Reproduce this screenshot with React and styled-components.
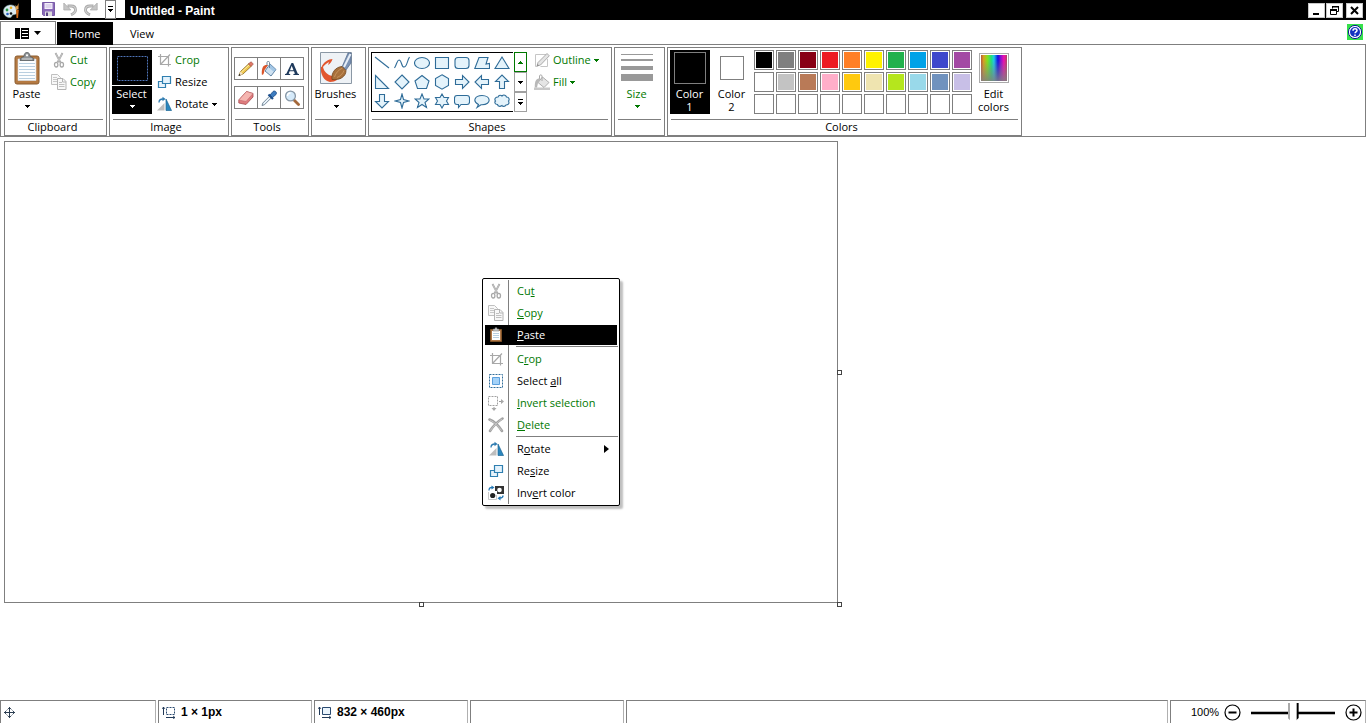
import React, { useState } from "react";
import styled, { createGlobalStyle, css } from "styled-components";

const GRAY = "#7f7f7f";
const GREEN = "#007800";
const UI = '"Open Sans", "Noto Sans", sans-serif';
const SANS = '"Liberation Sans", Arial, sans-serif';

const GlobalStyle = createGlobalStyle`
  *, *::before, *::after { box-sizing: border-box; }
  body { margin: 0; background: #fff; color: #000; font: 11px/13px ${UI}; overflow: hidden; }
  button { margin: 0; padding: 0; border: 0; background: none; color: inherit; font: inherit; }
  svg { display: block; flex: none; }
`;

const Window = styled.div`
  display: flex;
  flex-direction: column;
  height: 100vh;
`;

/* ---------- title bar ---------- */
const TitleBar = styled.header`
  display: flex;
  align-items: center;
  height: 20px;
  padding: 0 3px;
  background: #000;
  color: #fff;
`;
const QuickAccess = styled.div`
  display: flex;
  align-items: center;
  align-self: flex-start;
  gap: 7px;
  height: 18px;
  margin-left: 11px;
  padding: 0 9px 0 10px;
  background: #fff;
  color: #000;
`;
const QuickButton = styled.button`
  display: flex;
  height: 18px;
  align-items: center;
`;
const QuickMore = styled(QuickButton)`
  justify-content: center;
  width: 11px;
  height: 19px;
  border: 1px solid ${GRAY};
`;
const Title = styled.h1`
  flex: 1;
  margin: 0 0 0 5px;
  padding-top: 1px;
  font: bold 12px/14px ${SANS};
`;
const WindowButtons = styled.div`
  display: flex;
  gap: 1px;
`;
const WindowButton = styled.button`
  display: flex;
  align-items: center;
  justify-content: center;
  width: 17px;
  height: 15px;
  margin-left: ${(p) => (p.$apart ? 2 : 0)}px;
  border: 1px solid #c8c8c8;
  background: #fff;
`;

/* ---------- tabs ---------- */
const TabRow = styled.nav`
  display: flex;
  align-items: stretch;
  height: 25px;
  padding-top: 1px;
  border-bottom: 1px solid ${GRAY};
`;
const FileButton = styled.button`
  display: flex;
  align-items: center;
  gap: 5px;
  width: 56px;
  padding-left: 14px;
  border: 1px solid ${GRAY};
  border-bottom: 0;
`;
const Tab = styled.button`
  width: 56px;
  margin: 1px 0 -1px 1px;
  ${(p) => p.$active && css`background: #000; color: #fff;`}
`;
const HelpButton = styled.button`
  align-self: flex-start;
  margin: 3px 3px 0 auto;
`;

/* ---------- ribbon ---------- */
const Ribbon = styled.section`
  display: flex;
  gap: 2px;
  padding: 2px 3px 0;
  border: 1px solid ${GRAY};
  border-top: 0;
`;
const GroupBox = styled.section`
  display: flex;
  flex-direction: column;
  flex: none;
  width: ${(p) => p.$width}px;
  height: 89px;
  border: 1px solid ${GRAY};
`;
const GroupBody = styled.div`
  display: flex;
  flex: 1;
  align-items: flex-start;
  gap: ${(p) => p.$gap}px;
  padding: 2px 2px 0;
`;
const GroupLabel = styled.h2`
  height: 16px;
  margin: 0 3px;
  padding-right: 6px;
  border-top: 1px solid ${GRAY};
  font: inherit;
  text-align: center;
`;
const BigButton = styled.button`
  display: flex;
  flex-direction: column;
  align-items: center;
  width: ${(p) => p.$width || 40}px;
  height: 64px;
  padding-top: 2px;
  color: ${(p) => (p.$active ? "#fff" : p.disabled ? GREEN : "#000")};
  background: ${(p) => (p.$active ? "#000" : "transparent")};
`;
const SelectButton = styled(BigButton)`
  background: linear-gradient(#000 35px, #fff 35px, #fff 36px, #000 36px);
`;
const BigIcon = styled.span`
  display: flex;
  flex: none;
  align-items: center;
  justify-content: center;
  height: 32px;
`;
const BigText = styled.span`
  flex: none;
  margin: 3px 0 5px;
  padding-right: 1px;
  line-height: 13px;
`;
const CommandList = styled.div`
  display: flex;
  flex-direction: column;
  gap: 2px;
`;
const Command = styled.button`
  display: flex;
  align-items: center;
  gap: 3px;
  height: 20px;
  color: ${(p) => (p.disabled ? GREEN : "#000")};
`;
const CommandText = styled.span`
  padding-bottom: 2px;
`;
const ToolGrid = styled.div`
  display: grid;
  grid-template-columns: repeat(3, 23px);
  row-gap: 6px;
  padding-top: 7px;
`;
const ToolButton = styled.button`
  display: flex;
  align-items: center;
  justify-content: center;
  width: 24px;
  height: 23px;
  border: 1px solid ${GRAY};
`;
const Gallery = styled.div`
  display: flex;
  margin-top: 2px;
`;
const ShapeGrid = styled.div`
  display: grid;
  grid-template-columns: repeat(7, 20px);
  grid-template-rows: repeat(3, 1fr);
  width: 142px;
  height: 60px;
  border: 1px solid #000;
  border-right: 0;
`;
const ShapeButton = styled.button`
  display: flex;
  align-items: center;
  justify-content: center;
`;
const GalleryScroll = styled.div`
  display: grid;
  grid-template-rows: repeat(3, 1fr);
  width: 13px;
  margin-left: 1px;
`;
const ScrollButton = styled.button`
  display: flex;
  align-items: center;
  justify-content: center;
  color: ${(p) => (p.disabled ? GREEN : "#000")};
  border: 1px solid ${(p) => (p.disabled ? GREEN : "#a0a0a0")};
`;
const ColorWell = styled.span`
  width: ${(p) => p.$size}px;
  height: ${(p) => p.$size}px;
  border: 1px solid ${GRAY};
  background: ${(p) => p.$color};
`;
const Palette = styled.div`
  display: grid;
  grid-template-columns: repeat(10, 20px);
  gap: 2px;
`;
const Swatch = styled.button`
  width: 20px;
  height: 20px;
  padding: 1px;
  border: 1px solid ${GRAY};
  background: ${(p) => p.$color} content-box;
`;
const Spectrum = styled.span`
  width: 28px;
  height: 28px;
  border: 1px solid #fff;
  outline: 1px solid #aaa;
  background: linear-gradient(transparent 20%, #808080dd),
    linear-gradient(90deg, #b55a3c, #d8a020 10%, #7fe020 25%, #20e080 40%, #20c8e8 50%, #1010e0 65%, #8010d0 75%, #f010b0 88%, #b04060);
`;

/* ---------- canvas ---------- */
const Workspace = styled.main`
  position: relative;
  flex: 1;
  min-height: 0;
  padding: 4px;
  overflow: hidden;
`;
const Canvas = styled.div`
  position: relative;
  width: 834px;
  height: 462px;
  border: 1px solid ${GRAY};
  background: #fff;
`;
const Handle = styled.span`
  position: absolute;
  left: ${(p) => p.$left};
  top: ${(p) => p.$top};
  width: 5px;
  height: 5px;
  border: 1px solid #444;
  background: #fff;
`;

/* ---------- context menu ---------- */
const Menu = styled.ul`
  position: absolute;
  left: 482px;
  top: 141px;
  width: 138px;
  margin: 0;
  padding: 1px 2px;
  list-style: none;
  border: 1px solid #000;
  border-radius: 2px;
  background: linear-gradient(${GRAY}, ${GRAY}) 25px 1px / 1px calc(100% - 2px) no-repeat #fff;
  box-shadow: 3px 3px 2px rgba(0, 0, 0, 0.25);
`;
const MenuSeparator = styled.li`
  height: 2px;
  margin: 0 -1px 0 31px;
  border-top: 1px solid ${GRAY};
`;
const MenuItem = styled.button`
  display: flex;
  align-items: center;
  gap: 13px;
  width: 100%;
  height: 22px;
  padding: 0 8px 0 3px;
  border: solid transparent;
  border-width: 1px 0;
  background-clip: padding-box;
  text-align: left;
  color: ${(p) => (p.$active ? "#fff" : p.disabled ? GREEN : "#000")};
  background-color: ${(p) => (p.$active ? "#000" : "transparent")};
`;
const MenuText = styled.span`
  flex: 1;
  padding-bottom: 2px;
  white-space: nowrap;
`;

/* ---------- status bar ---------- */
const StatusBar = styled.footer`
  display: flex;
  gap: 2px;
  height: 23px;
`;
const StatusCell = styled.div`
  display: flex;
  align-items: center;
  gap: 5px;
  flex: ${(p) => (p.$grow ? "1" : "none")};
  width: ${(p) => p.$width || 154}px;
  padding-left: 3px;
  border: 1px solid ${GRAY};
  border-bottom: 0;
  border-right-color: #b0b0b0;
  font: bold 12px/14px ${SANS};
`;
const ZoomCell = styled(StatusCell)`
  padding-left: 20px;
  font-size: 11px;
  font-weight: normal;
`;
const ZoomRange = styled.input`
  appearance: none;
  width: 84px;
  height: 20px;
  margin: 2px 5px 0;
  background: linear-gradient(#bbb 0 1px, #000 1px 3px, #bbb 3px 4px) center / 100% 4px no-repeat;
  &::-webkit-slider-thumb {
    appearance: none;
    width: 11px;
    height: 20px;
    background: linear-gradient(90deg, #aaa 2px, #fff 2px, #fff 8px, #aaa 8px, #aaa 9px, #000 9px);
    clip-path: polygon(0 0, 100% 0, 100% 75%, 50% 100%, 0 75%);
  }
`;

/* ---------- icons ---------- */
const Svg = ({ w = 16, h = 16, children, ...rest }) => (
  <svg width={w} height={h} viewBox={`0 0 ${w} ${h}`} fill="none" aria-hidden="true" {...rest}>
    {children}
  </svg>
);
const Down = ({ wide }) =>
  wide ? (
    <Svg w={7} h={4}><path d="M0 0h7L3.500 4z" fill="currentColor" /></Svg>
  ) : (
    <Svg w={5} h={3} shapeRendering="crispEdges"><path d="M0 0h5v1H4v1H3v1H2V2H1V1H0z" fill="currentColor" /></Svg>
  );
const Up = () => (
  <Svg w={5} h={3} shapeRendering="crispEdges"><path d="M0 3h5V2H4V1H3V0H2v1H1v1H0z" fill="currentColor" /></Svg>
);
const DownBar = () => (
  <Svg w={5} h={6} shapeRendering="crispEdges"><path d="M0 0h5v1H0zM0 3h5v1H4v1H3v1H2V5H1V4H0z" fill="currentColor" /></Svg>
);

const AppIcon = () => (
  <Svg w={17} h={17}>
    <path d="M8 3C3.500 3 .5 5.500 .5 9.500S4 15.500 7 15.500c2 0 1.500-1.800 2.500-2.500 1.500-.8 4.500.2 4.500-3.500S11.500 3 8 3z" fill="#dcebf2" stroke="#8aa" strokeWidth=".6" />
    <circle cx="4" cy="8" r="1.400" fill="#2a9d4a" /><circle cx="8" cy="5.800" r="1.300" fill="#e8b020" />
    <circle cx="4.500" cy="12" r="1.300" fill="#2a60c0" /><circle cx="8" cy="11.500" r="1.300" fill="#111" />
    <path d="M13 8l.5 8h1.500l.8-8z" fill="#d06a1a" /><path d="M12.500 7.500V3l1.500 1.500L15.500 1v6.500z" fill="#e0a050" />
  </Svg>
);
const SaveIcon = () => (
  <Svg w={15} h={15}>
    <path d="M1.500.5h12v13h-11l-1-1z" fill="#8a6ab8" stroke="#7a5ca8" />
    <path d="M3.500 1h8v6h-8z" fill="#f4f0fa" /><path d="M4.500 3h6M4.500 5h6" stroke="#c8b8e0" />
    <path d="M4 9.500h7V14H4z" fill="#ddd" /><path d="M5 10.500h2V14H5z" fill="#5a4585" />
  </Svg>
);
const UndoIcon = ({ flip }) => (
  <Svg w={14} h={14} transform={flip ? "scale(-1 1)" : undefined}>
    <path d="M4.500 4H8c3 0 4.500 1.700 4.500 4S11 11.500 8 12.800" stroke="#a8a8a8" strokeWidth="2.800" />
    <path d="M5.500 4H8c3 0 4.500 1.700 4.500 4S11 11.500 8.500 12.500" stroke="#d2d2d2" strokeWidth="1.200" />
    <path d="M.8 1v7h7z" fill="#c6c6c6" stroke="#a8a8a8" strokeWidth=".7" />
  </Svg>
);
const MinIcon = () => <Svg w={11} h={11}><path d="M2 8h6v2H2z" fill="#000" /></Svg>;
const RestoreIcon = () => (
  <Svg w={11} h={11}>
    <path d="M3.500 1v2.500M3 1.500h7M9.500 1v5.500H8" stroke="#000" /><path d="M3 1h7v1.500H3z" fill="#000" />
    <path d="M1.500 4.500h6v5h-6z" stroke="#000" /><path d="M1 4h7v2H1z" fill="#000" />
  </Svg>
);
const CloseIcon = () => <Svg w={11} h={11}><path d="M2 2l7 7M9 2L2 9" stroke="#000" strokeWidth="2" /></Svg>;
const FileIcon = () => (
  <Svg w={14} h={11} shapeRendering="crispEdges">
    <path d="M0 0h5v11H0zM6 0h8v11H6zM7 2v1h6V2zM7 5v1h6V5zM7 8v1h6V8z" fill="#000" fillRule="evenodd" />
  </Svg>
);
const HelpIcon = () => (
  <Svg>
    <path d="M0 0h16v16H0z" fill="#35e04a" />
    <circle cx="8" cy="8" r="6.600" fill="#fff" stroke="#0a1a90" />
    <circle cx="8" cy="8" r="5" fill="#1230c0" />
    <path d="M6 6.800C6 5.300 7 4.800 8 4.800s2 .6 2 1.700c0 1.500-2 1.300-2 2.800M8 10.500V12" stroke="#fff" strokeWidth="1.500" />
  </Svg>
);
const PasteBig = () => (
  <Svg w={26} h={33}>
    <rect x="1" y="4" width="24" height="28" rx="2" fill="#b57a42" stroke="#8a5c30" />
    <path d="M4 7h18v21.500H4z" fill="#fdfeff" stroke="#d8dfe6" strokeWidth=".6" />
    <path d="M5 11.500h16M5 14.500h16M5 17.500h16M5 20.500h16M5 23.500h16M5 26.500h16" stroke="#b9cfe0" />
    <path d="M6 8.500c0-3 2-3 4-4 0-2.500 1-4 3-4s3 1.500 3 4c2 1 4 1 4 4z" fill="#8f9396" stroke="#565a5d" strokeWidth=".8" />
    <circle cx="13" cy="3.300" r="1.100" fill="#fff" /><path d="M8 7h10" stroke="#d5d8da" />
  </Svg>
);
const CutIcon = () => (
  <Svg>
    <path d="M4.500 1l5 9.500M11.500 1l-5 9.500" stroke="#a5a5a5" strokeWidth="1.800" />
    <path d="M4.800 1.500l4 8M11.200 1.500l-4 8" stroke="#d8d8d8" strokeWidth=".6" />
    <ellipse cx="5.200" cy="12.700" rx="1.700" ry="2.300" stroke="#a8a8a8" strokeWidth="1.300" />
    <ellipse cx="10.800" cy="12.700" rx="1.700" ry="2.300" stroke="#a8a8a8" strokeWidth="1.300" />
  </Svg>
);
const CopyIcon = () => (
  <Svg>
    <path d="M.5.5h6l3 3v7h-9z" fill="#f8f8f8" stroke="#c0c0c0" /><path d="M2 3.500h4M2 5.500h4M2 7.500h4" stroke="#c8c8c8" />
    <path d="M6.500 4.500h5.500l3 3v8H6.500z" fill="#f8f8f8" stroke="#b4b4b4" /><path d="M11.500 4.500v3.500h3.500" stroke="#b4b4b4" />
    <path d="M8 8.500h3M8 10.500h5.500M8 12.500h5.500" stroke="#c0c0c0" />
  </Svg>
);
const PasteSmall = () => (
  <Svg>
    <path d="M2.500 2.500h11v12h-11z" fill="#b07848" stroke="#7d5228" /><path d="M4 4h8v9H4z" fill="#fff" />
    <path d="M5 6.500h6M5 8.500h6M5 10.500h6" stroke="#b9cfe0" /><path d="M5 4V2h2V.8h2V2h2v2z" fill="#c8c8c8" stroke="#777" strokeWidth=".5" />
  </Svg>
);
const CropIcon = () => (
  <Svg>
    <path d="M4.500 2v10.500H15M2 4.500h10.500V14.500M4.500 12.500L14 2.500" stroke="#a8a8a8" strokeWidth="1.200" />
  </Svg>
);
const ResizeIcon = () => (
  <Svg>
    <path d="M2.500 7.500h7v6h-7z" fill="#e8f3fb" stroke="#2f7fb0" strokeWidth="1.200" />
    <path d="M6.500 2.500h8v7h-8z" fill="#e3f2fc" stroke="#2f7fb0" strokeWidth="1.200" />
  </Svg>
);
const RotateIcon = () => (
  <Svg>
    <path d="M8.500 7v7.500H1z" fill="#bdbdbd" /><path d="M10 3v11.500h5.500z" fill="#2b86bd" stroke="#1d6797" strokeWidth=".7" />
    <path d="M3 6.500C3 4 4.500 3 7 3" stroke="#2c7ab0" strokeWidth="1.300" /><path d="M6.500.8v4.400L9.500 3z" fill="#2c7ab0" />
  </Svg>
);
const SelectBig = () => (
  <Svg w={31} h={25}><path d="M.5.5h30v24H.5z" stroke="#4f74b8" strokeDasharray="2 1" /></Svg>
);
const SelectAllIcon = () => (
  <Svg><path d="M1.500 1.500h13v13h-13z" stroke="#336f9b" strokeDasharray="2 1" /><path d="M4.500 4.500h7v7h-7z" fill="#a4d2f8" stroke="#5b9fdc" /></Svg>
);
const InvertSelIcon = () => (
  <Svg>
    <path d="M.5 1.500h9v9h-9z" stroke="#a0a0a0" strokeDasharray="2 1" />
    <path d="M11 6.500h4M6 12v3" stroke="#9a9a9a" /><path d="M13 4v5l3-2.500zM3.500 13h5L6 16z" fill="#a8a8a8" />
  </Svg>
);
const DeleteIcon = () => (
  <Svg>
    <path d="M1.500 2.500c5 2 9 6 12.500 11.500M14.500 1.500C9 5 5 9 2 14" stroke="#a2a2a2" strokeWidth="2.600" strokeLinecap="round" />
    <path d="M2 3c5 2.500 8 6 11.500 10.500M14 2C9 5.500 5 9.500 2.500 13.500" stroke="#ccc" strokeWidth=".9" />
  </Svg>
);
const InvertColorIcon = () => (
  <Svg>
    <path d="M7 1h9v8H9V6H7z" fill="#333" /><circle cx="11.500" cy="5" r="2.300" fill="#fff" />
    <circle cx="4.700" cy="10.500" r="2.600" fill="#222" /><path d="M.5 7v7.500h8V10" stroke="#bbb" strokeWidth=".8" />
    <path d="M1 5.500C1 3 2 2.500 4 2.500M15 10.500c0 2-1 2.500-3 2.500" stroke="#2378b5" strokeWidth="1.300" />
    <path d="M3.500.5v4l3-2zM12.500 11v4.500l-3-2.200z" fill="#2378b5" />
  </Svg>
);
const ToolIcons = {
  Pencil: (
    <Svg>
      <path d="M1 14.500l1.500-4 8.500-8 2.500 2.500-8.500 8z" fill="#f0c850" stroke="#8a6a20" strokeWidth=".8" />
      <path d="M10.500 3l2.500 2.500 2-2c.7-.7-1.800-3.200-2.500-2.500z" fill="#e07868" stroke="#97463a" strokeWidth=".6" />
      <path d="M1 14.500l1.500-4L5 13z" fill="#f4e4c8" /><path d="M.5 15l.7-2.200 1.500 1.500z" fill="#222" /><path d="M3.500 11l7.500-7" stroke="#fff0a8" />
    </Svg>
  ),
  "Fill with color": (
    <Svg>
      <path d="M9 3l6 5.500-5 6.500-6-5z" fill="#cfe2f2" stroke="#54789c" strokeWidth=".9" />
      <path d="M9 3l6 5.500-2 2.500L7 6z" fill="#86b4dc" opacity=".6" />
      <path d="M8.500 7V1.500C8.500 0 6 0 6 1.500V5" stroke="#6e8496" />
      <path d="M7 4C3 3.500.5 5 .8 13.500 2 14.500 3 13 3.500 9L5 7z" fill="#d9552b" />
    </Svg>
  ),
  Text: (
    <Svg>
      <path d="M7.500 2h1.700l4.600 10.700 1.200.4v.9H9.400v-.9l1.500-.4-.9-2.400H5.600l-.9 2.400 1.500.4v.9H1v-.9l1.300-.4zM7.700 4.800L6 9.300h3.500z" fill="#1f3a5c" />
    </Svg>
  ),
  Eraser: (
    <Svg>
      <path d="M.8 10L8.500 1.500l6.500 2v3.500L8 14.500l-7.200-1.500z" fill="#e07c7e" stroke="#a84c50" strokeWidth=".8" />
      <path d="M.8 10L8.500 1.500l6.500 2L8 11.500z" fill="#f5b5b0" stroke="#b86266" strokeWidth=".5" />
    </Svg>
  ),
  "Color picker": (
    <Svg>
      <path d="M1 15.500l.8-2.500 7-7 1.700 1.700-7 7z" fill="#e8f2fa" stroke="#6a7f90" strokeWidth=".9" />
      <path d="M7.500 4.500l4.500 4.500" stroke="#1c4f8c" strokeWidth="2.200" />
      <path d="M9 5l3-3.500c2-1.500 4.500 1 3 3L11.500 7.500z" fill="#3d7cc0" stroke="#1a4a84" strokeWidth=".8" />
    </Svg>
  ),
  Magnifier: (
    <Svg>
      <path d="M10 10l4.500 4.500" stroke="#a4683a" strokeWidth="2.800" strokeLinecap="round" />
      <circle cx="6.500" cy="6" r="4.900" fill="#d5eafa" stroke="#8797a6" strokeWidth="1.300" />
      <path d="M3.500 6c0-2 1-3 3-3" stroke="#fff" strokeWidth="1.400" />
    </Svg>
  ),
};
const BrushIcon = () => (
  <Svg w={32} h={32}>
    <path d="M.5.5h31v31H.5z" fill="#eef2f6" stroke="#8b98a5" />
    <path d="M12.500 7c-4 0-9 3-11 8l-.5 3c3-5 6-7 8-8l-1 3c2-1 4-4 4.500-6z" fill="#e2562e" />
    <path d="M1 15c-1 7 3 14 9 15 3 0 5-1 7-2l-5-4C8 23 4 20 3 15z" fill="#e2562e" />
    <path d="M22 15L28 1h3v10l-5 7z" fill="#7b93b5" stroke="#52688a" strokeWidth=".7" />
    <path d="M24 15L30.500 2" stroke="#e6eef7" strokeWidth="2" />
    <path d="M12 27.500c-1-6 3-12.500 10-13l4 4c0 6-6 10-14 9z" fill="#a8713c" stroke="#704620" strokeWidth=".8" />
    <path d="M14.500 25c1-4 4-7 8-9M17 25.500c3-1 6-4 7-7" stroke="#c99560" strokeWidth=".9" />
  </Svg>
);
const OutlineIcon = () => (
  <Svg>
    <path d="M12 2.500H1.500v12h2M13.500 7v7.500h-7" stroke="#c6c6c6" />
    <path d="M3 14l1-3.500L13 1.500l2.300 2.300L6.500 13z" fill="#e4e4e4" stroke="#a2a2a2" strokeWidth=".9" /><path d="M3 14l.6-2 1.500 1.500z" fill="#888" />
  </Svg>
);
const FillIcon = () => (
  <Svg>
    <path d="M0 13.500h16V16H0z" fill="#c8c8c8" />
    <path d="M8.500 3l6.500 5.500-5 5L4 8.500z" fill="#e5e5e5" stroke="#a6a6a6" strokeWidth=".9" />
    <path d="M8 7V2C8 .5 5.500.5 5.500 2v3.500" stroke="#aaa" /><path d="M6.500 4.500C3 4 .5 5.500.8 13.500H3L4 9z" fill="#b8b8b8" />
  </Svg>
);
const SizeIcon = () => (
  <Svg w={32} h={28}><path d="M0 0h32v1H0zM0 5h32v2H0zM0 12h32v4H0zM0 20h32v7H0z" fill="#999" /></Svg>
);
const MoveIcon = () => (
  <Svg w={11} h={11}>
    <path d="M5.500 0v11M0 5.500h11" stroke="#2a3c50" /><path d="M3.500 2.500l2-2 2 2M3.500 8.500l2 2 2-2M2.500 3.500l-2 2 2 2M8.500 3.500l2 2-2 2" stroke="#2a3c50" strokeWidth=".9" />
  </Svg>
);
const DimensionIcon = ({ dashed }) => (
  <Svg w={14} h={13}>
    <path d="M4.500 1.500h8v7h-8z" fill={dashed ? "#fff" : "#eaf4fc"} stroke="#2a4a70" strokeDasharray={dashed ? "2 1" : undefined} />
    <path d="M1.500 1v8M4 11.500h9" stroke="#223a58" />
    <path d="M0 3l1.500-2L3 3M11 10l2 1.500-2 1.500" stroke="#223a58" strokeWidth=".8" />
  </Svg>
);
const ZoomIcon = ({ plus }) => (
  <Svg w={17} h={17}>
    <circle cx="8.500" cy="8.500" r="7.500" fill="#fff" stroke="#000" strokeWidth="1.200" />
    <path d={plus ? "M4.500 8.500h8M8.500 4.500v8" : "M4.500 8.500h8"} stroke="#000" strokeWidth="2" />
  </Svg>
);

const SHAPES = [
  ["Line", "M1 2l14 11"],
  ["Curve", "M.5 13C3 9 3 5 5 5c3 0 2 7 5 7S13 6 15.500 2"],
  ["Oval", "M.5 8a7.500 5.500 0 1 0 15 0a7.500 5.500 0 1 0-15 0"],
  ["Rectangle", "M1.500 2.500h13v11h-13z"],
  ["Rounded rectangle", "M4 2.500h8c2 0 3 1 3 3v5c0 2-1 3-3 3H4c-2 0-3-1-3-3v-5c0-2 1-3 3-3z"],
  ["Polygon", "M5 2.500h9L12 9l3.500-.5v5H.8z"],
  ["Triangle", "M8 2l7 11.500H1z"],
  ["Right triangle", "M1.500 1.500L14.500 14.500H1.500z"],
  ["Diamond", "M8 1l7 7-7 7-7-7z"],
  ["Pentagon", "M8 1.500l7 5.500-2.500 7.500h-9L1 7z"],
  ["Hexagon", "M8 .8l6.500 3.700v7L8 15.200l-6.500-3.700v-7z"],
  ["Right arrow", "M1.500 5.500h7v-4L15 8l-6.500 6.500v-4h-7z"],
  ["Left arrow", "M14.500 5.500h-7v-4L1 8l6.500 6.500v-4h7z"],
  ["Up arrow", "M5.500 14.500v-7h-4L8 1l6.500 6.500h-4v7z"],
  ["Down arrow", "M5.500 1.500v7h-4L8 15l6.500-6.500h-4v-7z"],
  ["Four-point star", "M8 1l1.500 5.500L15 8 9.500 9.500 8 15 6.500 9.500 1 8l5.500-1.500z"],
  ["Five-point star", "M8 1l2 5h5l-4 3.500 1.500 5L8 11.500l-4.500 3 1.500-5L1 6h5z"],
  ["Six-point star", "M8 1l2 3.500h4.500l-2 3.500 2 3.500H10L8 15l-2-3.500H1.500l2-3.500-2-3.500H6z"],
  ["Rounded callout", "M3 2.500h10q2.500 0 2.500 2.500v4q0 2.500-2.500 2.500H7L4.500 14.500v-3H3Q.5 11.500.5 9V5Q.5 2.500 3 2.500z"],
  ["Oval callout", "M3 14.500l1.500-3C-2 8 1 2.500 8 2.500c9 0 10 9 0 9.300H7z"],
  ["Cloud callout", "M4 4c1-2.500 3-2 4-1 2-2 4-.5 4.500 1 3 0 3 3 2 4 1.500 3-1 4-2.500 4-1 2-3.500 1.500-4 .5-2 1.500-4 1-4.500-1C.5 11.500.5 9 1.500 8 0 6 1.500 4 4 4z"],
];

const COLORS = [
  ["Black", "#000000"], ["Gray", "#7f7f7f"], ["Dark red", "#880015"], ["Red", "#ed1c24"], ["Orange", "#ff7f27"],
  ["Yellow", "#fff200"], ["Green", "#22b14c"], ["Turquoise", "#00a2e8"], ["Indigo", "#3f48cc"], ["Purple", "#a349a4"],
  ["White", "#ffffff"], ["Light gray", "#c3c3c3"], ["Brown", "#b97a57"], ["Rose", "#ffaec9"], ["Gold", "#ffc90e"],
  ["Light yellow", "#efe4b0"], ["Lime", "#b5e61d"], ["Light turquoise", "#99d9ea"], ["Blue-gray", "#7092be"], ["Lavender", "#c8bfe7"],
  ...Array.from({ length: 10 }, (_, i) => [`Custom color ${i + 1}`, "#ffffff"]),
];

const MENU = [
  { before: "Cu", key: "t", after: "", icon: <CutIcon />, disabled: true },
  { before: "", key: "C", after: "opy", icon: <CopyIcon />, disabled: true },
  { before: "", key: "P", after: "aste", icon: <PasteSmall />, active: true },
  null,
  { before: "C", key: "r", after: "op", icon: <CropIcon />, disabled: true },
  { before: "Select ", key: "a", after: "ll", icon: <SelectAllIcon /> },
  { before: "", key: "I", after: "nvert selection", icon: <InvertSelIcon />, disabled: true },
  { before: "", key: "D", after: "elete", icon: <DeleteIcon />, disabled: true },
  null,
  { before: "R", key: "o", after: "tate", icon: <RotateIcon />, submenu: true },
  { before: "Re", key: "s", after: "ize", icon: <ResizeIcon /> },
  { before: "Inv", key: "e", after: "rt color", icon: <InvertColorIcon /> },
];

const Group = ({ label, width, gap = 4, children }) => (
  <GroupBox $width={width}>
    <GroupBody $gap={gap}>{children}</GroupBody>
    <GroupLabel>{label}</GroupLabel>
  </GroupBox>
);

const Big = ({ as: Button = BigButton, icon, text, arrow, ...rest }) => (
  <Button {...rest}>
    <BigIcon>{icon}</BigIcon>
    <BigText>{text}</BigText>
    {arrow && <Down />}
  </Button>
);

const SmallCommand = ({ icon, text, arrow, ...rest }) => (
  <Command {...rest}>
    {icon}
    <CommandText>{text}</CommandText>
    {arrow && <Down />}
  </Command>
);

export default function App() {
  const [zoom, setZoom] = useState(50);
  return (
    <Window>
      <GlobalStyle />
      <TitleBar>
        <AppIcon />
        <QuickAccess>
          <QuickButton aria-label="Save"><SaveIcon /></QuickButton>
          <QuickButton aria-label="Undo" disabled><UndoIcon /></QuickButton>
          <QuickButton aria-label="Redo" disabled><UndoIcon flip /></QuickButton>
          <QuickMore aria-label="Customize Quick Access Toolbar"><DownBar /></QuickMore>
        </QuickAccess>
        <Title>Untitled - Paint</Title>
        <WindowButtons>
          <WindowButton aria-label="Minimize"><MinIcon /></WindowButton>
          <WindowButton aria-label="Restore"><RestoreIcon /></WindowButton>
          <WindowButton aria-label="Close" $apart><CloseIcon /></WindowButton>
        </WindowButtons>
      </TitleBar>

      <TabRow>
        <FileButton aria-label="File"><FileIcon /><Down wide /></FileButton>
        <Tab $active>Home</Tab>
        <Tab>View</Tab>
        <HelpButton aria-label="Help"><HelpIcon /></HelpButton>
      </TabRow>

      <Ribbon>
        <Group label="Clipboard" width={103}>
          <Big icon={<PasteBig />} text="Paste" arrow />
          <CommandList>
            <SmallCommand disabled icon={<CutIcon />} text="Cut" />
            <SmallCommand disabled icon={<CopyIcon />} text="Copy" />
          </CommandList>
        </Group>
        <Group label="Image" width={120}>
          <Big as={SelectButton} $active icon={<SelectBig />} text="Select" arrow />
          <CommandList>
            <SmallCommand disabled icon={<CropIcon />} text="Crop" />
            <SmallCommand icon={<ResizeIcon />} text="Resize" />
            <SmallCommand icon={<RotateIcon />} text="Rotate" arrow />
          </CommandList>
        </Group>
        <Group label="Tools" width={78}>
          <ToolGrid>
            {Object.entries(ToolIcons).map(([name, icon]) => (
              <ToolButton key={name} aria-label={name}>{icon}</ToolButton>
            ))}
          </ToolGrid>
        </Group>
        <Group label="" width={55}>
          <Big $width={44} icon={<BrushIcon />} text="Brushes" arrow />
        </Group>
        <Group label="Shapes" width={244} gap={7}>
          <Gallery>
            <ShapeGrid>
              {SHAPES.map(([name, d]) => (
                <ShapeButton key={name} aria-label={name}>
                  <Svg><path d={d} fill={name === "Line" || name === "Curve" ? "none" : "#e4f3fb"} stroke="#2f6c98" strokeWidth="1.100" /></Svg>
                </ShapeButton>
              ))}
            </ShapeGrid>
            <GalleryScroll>
              <ScrollButton disabled aria-label="Scroll up"><Up /></ScrollButton>
              <ScrollButton aria-label="Scroll down"><Down /></ScrollButton>
              <ScrollButton aria-label="More shapes"><DownBar /></ScrollButton>
            </GalleryScroll>
          </Gallery>
          <CommandList>
            <SmallCommand disabled icon={<OutlineIcon />} text="Outline" arrow />
            <SmallCommand disabled icon={<FillIcon />} text="Fill" arrow />
          </CommandList>
        </Group>
        <Group label="" width={51}>
          <Big disabled icon={<SizeIcon />} text="Size" arrow />
        </Group>
        <Group label="Colors" width={355} gap={2}>
          <Big $active icon={<ColorWell $size={32} $color="#000" />} text={<>Color<br />1</>} />
          <Big icon={<ColorWell $size={24} $color="#fff" />} text={<>Color<br />2</>} />
          <Palette>
            {COLORS.map(([name, color]) => (
              <Swatch key={name} $color={color} aria-label={name} />
            ))}
          </Palette>
          <Big icon={<Spectrum />} text={<>Edit<br />colors</>} />
        </Group>
      </Ribbon>

      <Workspace>
        <Canvas>
          <Handle $left="832px" $top="228px" />
          <Handle $left="414px" $top="460px" />
          <Handle $left="832px" $top="460px" />
        </Canvas>
        <Menu>
          {MENU.map((item, i) =>
            item ? (
              <li key={i}>
                <MenuItem disabled={item.disabled} $active={item.active}>
                  {item.icon}
                  <MenuText>{item.before}<u>{item.key}</u>{item.after}</MenuText>
                  {item.submenu && <Svg w={5} h={8}><path d="M0 0l5 4-5 4z" fill="#000" /></Svg>}
                </MenuItem>
              </li>
            ) : (
              <MenuSeparator key={i} role="separator" />
            )
          )}
        </Menu>
      </Workspace>

      <StatusBar>
        <StatusCell $width={156}><MoveIcon /></StatusCell>
        <StatusCell><DimensionIcon dashed />1 × 1px</StatusCell>
        <StatusCell><DimensionIcon />832 × 460px</StatusCell>
        <StatusCell />
        <StatusCell $grow />
        <ZoomCell $width={196}>
          <label htmlFor="zoom">100%</label>
          <button aria-label="Zoom out"><ZoomIcon /></button>
          <ZoomRange id="zoom" type="range" value={zoom} onChange={(e) => setZoom(e.target.value)} />
          <button aria-label="Zoom in"><ZoomIcon plus /></button>
        </ZoomCell>
      </StatusBar>
    </Window>
  );
}
